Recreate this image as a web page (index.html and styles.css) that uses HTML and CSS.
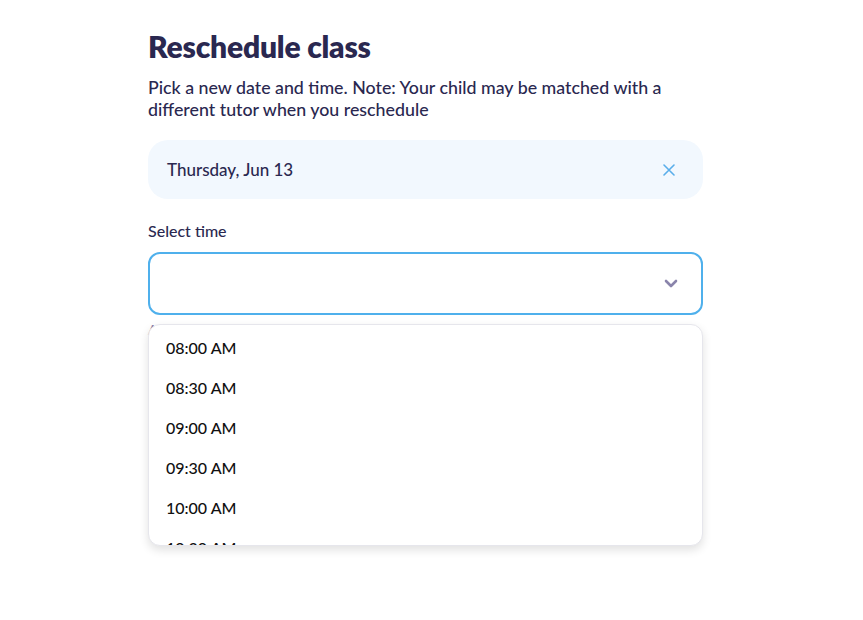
FILE: index.html
```html
<!DOCTYPE html>
<html lang="en">
<head>
    <meta charset="UTF-8">
    <meta name="viewport" content="width=device-width, initial-scale=1.0">
    <title>Reschedule class</title>
    <link rel="stylesheet" href="styles.css">
</head>
<body>
    <div class="reschedule-container">
        <h2>Reschedule class</h2>
        <p class="subtitle">Pick a new date and time. Note: Your child may be matched with a different tutor when you reschedule</p>

        <div class="date-box">
            <span class="date-text">Thursday, Jun 13</span>
            <button class="clear-btn" aria-label="Clear date">
                <svg width="12" height="12" viewBox="0 0 12 12" fill="none">
                    <path d="M1 1L11 11M11 1L1 11" stroke="#5aaeea" stroke-width="1.6" stroke-linecap="round"/>
                </svg>
            </button>
        </div>

        <div class="form-group">
            <label class="field-label">Select time</label>
            <div class="select-wrap">
                <div class="select-box">
                    <svg class="chevron" width="14" height="9" viewBox="0 0 14 9" fill="none">
                        <path d="M2 2L7 7L12 2" stroke="#8a84ab" stroke-width="2.6" stroke-linecap="round" stroke-linejoin="round"/>
                    </svg>
                </div>
                <p class="hint">All times are shown in your local time zone</p>

                <!-- open time menu -->
                <ul class="dropdown">
                    <li>08:00 AM</li>
                    <li>08:30 AM</li>
                    <li>09:00 AM</li>
                    <li>09:30 AM</li>
                    <li>10:00 AM</li>
                    <li>10:30 AM</li>
                </ul>
            </div>
        </div>
    </div>
</body>
</html>
```

FILE: styles.css
```css
* {
    margin: 0;
    padding: 0;
    box-sizing: border-box;
}

html, body {
    min-height: 100%;
}

body {
    font-family: 'Lato', 'Noto Sans', sans-serif;
    background: #ffffff;
    color: #2a2850;
    min-height: 620px;
}

.reschedule-container {
    width: 555px;
    margin-left: 148px;
    padding-top: 28px;
    padding-bottom: 260px;
}

h2 {
    font-size: 30px;
    line-height: 36px;
    font-weight: 800;
    color: #2a2850;
    letter-spacing: -0.2px;
}

.subtitle {
    margin-top: 12px;
    font-size: 17.8px;
    line-height: 22px;
    font-weight: 500;
    color: #2a2850;
}

.date-box {
    margin-top: 20px;
    height: 59px;
    background: #f2f8fe;
    border-radius: 20px;
    display: flex;
    align-items: center;
    justify-content: space-between;
    padding: 0 28px 0 19px;
}

.date-text {
    font-size: 17px;
    font-weight: 500;
    color: #2a2850;
}

.clear-btn {
    background: none;
    border: none;
    display: flex;
    cursor: pointer;
}

.form-group {
    margin-top: 22px;
}

.field-label {
    display: block;
    font-size: 16px;
    line-height: 20px;
    font-weight: 500;
    color: #2a2850;
    margin-bottom: 11px;
}

.select-wrap {
    position: relative;
}

.select-box {
    height: 63px;
    border: 2px solid #4fb0ec;
    border-radius: 12px;
    display: flex;
    align-items: center;
    justify-content: flex-end;
    padding-right: 23px;
}

.hint {
    margin-top: 6px;
    font-size: 14px;
    line-height: 18px;
    color: #8a84ab;
}

.dropdown {
    position: absolute;
    top: 72px;
    left: 0;
    right: 0;
    height: 222px;
    overflow: hidden;
    list-style: none;
    background: #ffffff;
    border: 1px solid #e6e6ec;
    border-radius: 12px;
    box-shadow: 0 4px 10px rgba(0, 0, 0, 0.12);
    padding-top: 2px;
}

.dropdown li {
    height: 40px;
    display: flex;
    align-items: center;
    padding-left: 17px;
    font-size: 16px;
    font-weight: 500;
    color: #111111;
}
```
